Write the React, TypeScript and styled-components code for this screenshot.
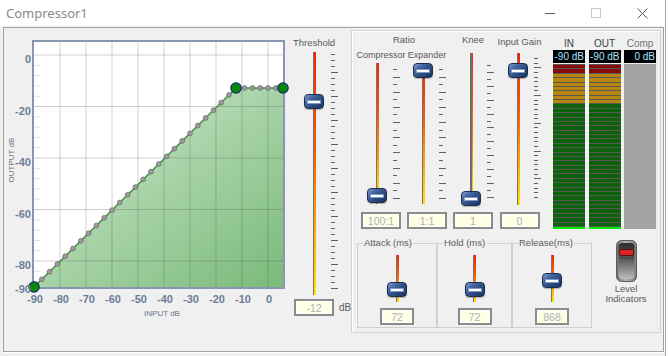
import React from "react";
import styled, { createGlobalStyle } from "styled-components";

const GlobalStyle = createGlobalStyle`
  html, body { margin: 0; padding: 0; background: #ffffff; }
  body { width: 668px; height: 356px; overflow: hidden; font-family: "Liberation Sans", Arial, sans-serif; }
  * { box-sizing: border-box; }
`;

const Window = styled.div`
  width: 666px;
  height: 356px;
  display: flex;
  flex-direction: column;
  background: #f0f0f0;
  border-right: 1px solid #a8a8a8;
`;

const TitleBar = styled.div`
  height: 26px;
  flex-shrink: 0;
  background: #ffffff;
  display: flex;
  align-items: center;
  padding-left: 6px;
`;

const Title = styled.div`
  flex: 1;
  font-family: "Noto Sans", "Liberation Sans", sans-serif;
  font-size: 13px;
  line-height: 26px;
  color: #8a8a8a;
`;

const WinButton = styled.div`
  width: 46px;
  height: 26px;
  display: flex;
  align-items: center;
  justify-content: center;
`;

const Body = styled.div`
  flex: 1;
  display: flex;
  padding: 1px 1px 4px 3px;
`;

const Frame = styled.div`
  flex: 1;
  display: flex;
  align-items: flex-start;
  border: 1px solid #a2a2a2;
  box-shadow: 0 1px 0 #ffffff, 1px 0 0 #ffffff;
`;

const ChartSvg = styled.svg`
  flex-shrink: 0;
  display: block;
`;

const AxisText = styled.text`
  font-family: "Liberation Sans", Arial, sans-serif;
  font-size: 11px;
  font-weight: bold;
  fill: #6d7d97;
`;

const AxisTitle = styled.text`
  font-family: "Liberation Sans", Arial, sans-serif;
  font-size: 8px;
  fill: #6a7589;
`;

const ThresholdCol = styled.div`
  width: 60px;
  flex-shrink: 0;
  display: flex;
  flex-direction: column;
  padding-top: 9px;
`;

const Label = styled.div<{ $mt?: number; $w?: number; $fs?: number }>`
  margin-top: ${(p) => p.$mt ?? 0}px;
  ${(p) => (p.$w ? `width: ${p.$w}px;` : "")}
  height: 12px;
  line-height: 12px;
  font-size: ${(p) => p.$fs ?? 9.5}px;
  color: #5a5a5a;
  display: flex;
  justify-content: center;
  white-space: nowrap;
`;

const SliderRow = styled.div<{ $h: number; $pl: number; $mt: number; $center?: boolean }>`
  display: flex;
  height: ${(p) => p.$h}px;
  margin-top: ${(p) => p.$mt}px;
  padding-left: ${(p) => p.$pl}px;
  justify-content: ${(p) => (p.$center ? "center" : "flex-start")};
  align-self: stretch;
`;

const TrackWrap = styled.div`
  position: relative;
  width: 20px;
  height: 100%;
  display: flex;
  justify-content: center;
  flex-shrink: 0;
`;

const Track = styled.div<{ $gray?: boolean }>`
  width: 3px;
  height: 100%;
  background: ${(p) =>
    p.$gray
      ? "linear-gradient(to right, #6c6c6c 0 2px, transparent 2px), linear-gradient(#ff2a00, #ff7a00 55%, #ffe000)"
      : "linear-gradient(to right, #747474 0 1px, transparent 1px), linear-gradient(#ff1e00, #ff5a00 40%, #ffa000 68%, #ffe600)"};
`;

const Handle = styled.div<{ $top: number }>`
  position: absolute;
  left: 0;
  top: ${(p) => p.$top}px;
  width: 20px;
  height: 15px;
  border-radius: 4px;
  border: 1px solid #1c2d52;
  background: linear-gradient(140deg, #86a2d0 0%, #46679f 28%, #2c4b80 60%, #1b3260 100%);
  box-shadow: 0 1px 1px rgba(0, 0, 0, 0.25);
  display: flex;
  align-items: center;
  justify-content: center;
`;

const Grip = styled.div`
  width: 12px;
  height: 2px;
  background: #ffffff;
  box-shadow: 0 0 0 1px rgba(150, 182, 228, 0.7);
`;

const Ticks = styled.div<{ $pt: number; $pb: number; $ml: number }>`
  height: 100%;
  margin-left: ${(p) => p.$ml}px;
  padding-top: ${(p) => p.$pt}px;
  padding-bottom: ${(p) => p.$pb}px;
  display: flex;
  flex-direction: column;
  justify-content: space-between;
`;

const Tick = styled.div<{ $long: boolean }>`
  height: 1px;
  width: ${(p) => (p.$long ? 7 : 4)}px;
  background: #626262;
`;

const ValueBox = styled.div<{ $w?: number; $mt?: number }>`
  width: ${(p) => p.$w ?? 40}px;
  height: 17px;
  margin-top: ${(p) => p.$mt ?? 0}px;
  flex-shrink: 0;
  align-self: center;
  border: 2px solid #8b8b8b;
  box-shadow: inset 0 0 0 1px #ffffff;
  background: #ffffe3;
  color: #a7b1bb;
  font-size: 10.5px;
  display: flex;
  align-items: center;
  justify-content: center;
`;

const ValueRow = styled.div`
  display: flex;
  align-items: center;
  margin-top: 4px;
  padding-left: 4px;
`;

const Unit = styled.span`
  margin-left: 5px;
  font-size: 10px;
  color: #5a5a5a;
`;

const Panel = styled.div`
  width: 310px;
  height: 303px;
  margin: 2px 0 0 1px;
  flex-shrink: 0;
  border: 1px solid #d2d2d2;
  box-shadow: inset 1px 1px 0 #ffffff;
  display: flex;
  flex-direction: column;
`;

const TopRow = styled.div`
  display: flex;
  align-items: flex-start;
  padding: 3px 0 0 6px;
`;

const RatioGroup = styled.div`
  width: 92px;
  display: flex;
  flex-direction: column;
`;

const SubRow = styled.div`
  display: flex;
  margin-top: 3px;
`;

const SliderCol = styled.div<{ $w: number }>`
  width: ${(p) => p.$w}px;
  display: flex;
  flex-direction: column;
`;

const Meters = styled.div`
  display: flex;
  gap: 3.5px;
  margin-left: 10px;
`;

const MeterCol = styled.div`
  width: 32px;
  display: flex;
  flex-direction: column;
`;

const MeterLabel = styled.div<{ $dim?: boolean }>`
  margin-top: 4px;
  height: 12px;
  line-height: 12px;
  font-size: 10px;
  text-align: center;
  color: ${(p) => (p.$dim ? "#747474" : "#404040")};
`;

const Readout = styled.div`
  height: 13px;
  background: #000000;
  color: #a2e6ff;
  font-size: 10px;
  line-height: 13px;
  text-align: right;
  padding-right: 1px;
  white-space: nowrap;
`;

const Bar = styled.div`
  height: 165px;
  margin-top: 1px;
  display: flex;
  flex-direction: column;
  gap: 1px;
  padding-top: 1px;
  background: #575757;
`;

const Segment = styled.div<{ $c: string }>`
  flex: 1;
  background: ${(p) => p.$c};
`;

const BrightLine = styled.div`
  height: 2px;
  flex: none;
  background: #00ee00;
`;

const CompBar = styled.div`
  height: 165px;
  margin-top: 1px;
  background: #a3a3a3;
`;

const BottomRow = styled.div`
  display: flex;
  align-items: flex-start;
  margin-top: 8px;
  padding-left: 5px;
`;

const Group = styled.fieldset<{ $w: number }>`
  width: ${(p) => p.$w}px;
  min-width: 0;
  margin: 0;
  padding: 6px 0 2px;
  border: 1px solid #d0d0d0;
  display: flex;
  flex-direction: column;
  align-items: center;
`;

const Legend = styled.legend`
  margin-left: 5px;
  padding: 0 1px;
  font-size: 9.5px;
  line-height: 12px;
  color: #5a5a5a;
`;

const LevelCol = styled.div`
  flex: 1;
  display: flex;
  flex-direction: column;
  align-items: center;
  padding-top: 3px;
`;

const LevelText = styled.div`
  margin-top: 2px;
  font-size: 9.5px;
  line-height: 10px;
  text-align: center;
  color: #5a5a5a;
`;

type SliderProps = {
  h: number;
  top: number;
  ticks?: boolean[];
  pt?: number;
  pb?: number;
  ml?: number;
  pl?: number;
  mt?: number;
  gray?: boolean;
  center?: boolean;
};

function VSlider({ h, top, ticks, pt = 0, pb = 0, ml = 6, pl = 0, mt = 0, gray, center }: SliderProps) {
  return (
    <SliderRow $h={h} $pl={pl} $mt={mt} $center={center}>
      <TrackWrap>
        <Track $gray={gray} />
        <Handle $top={top}>
          <Grip />
        </Handle>
      </TrackWrap>
      {ticks && (
        <Ticks $pt={pt} $pb={pb} $ml={ml}>
          {ticks.map((l, i) => (
            <Tick key={i} $long={l} />
          ))}
        </Ticks>
      )}
    </SliderRow>
  );
}

const range = (n: number, f: (i: number) => boolean) => Array.from({ length: n }, (_, i) => f(i));

const thresholdTicks = range(40, (i) => (39 - i) % 4 === 0);
const ratioTicks = range(18, (i) => i % 2 === 1);
const kneeTicks = range(20, (i) => i % 2 === 1);
const gainTicks = range(31, (i) => i % 6 === 2);

const segColors = [
  ...Array(2).fill("#880b0b"),
  ...Array(7).fill("#b8860e"),
  ...Array(28).fill("#0b620b"),
];

function Meter({ label, value }: { label: string; value: string }) {
  return (
    <MeterCol>
      <MeterLabel>{label}</MeterLabel>
      <Readout>{value}</Readout>
      <Bar>
        {segColors.map((c, i) => (
          <Segment key={i} $c={c} />
        ))}
        <BrightLine />
      </Bar>
    </MeterCol>
  );
}

function Chart() {
  const X = (d: number) => 34 + (d + 90) * 2.6;
  const Y = (d: number) => 55 - d * 2.575;
  const start = { x: 34, y: 287 };
  const knee = { x: 236, y: 88 };
  const end = { x: 283, y: 88 };
  const vLines = [-80, -70, -60, -50, -40, -30, -20, -10, 0];
  const hLines = [0, -20, -40, -60, -80];
  const minor: number[] = [];
  for (let k = 1; k <= 22; k++) if (k % 5 !== 0) minor.push(55 + k * 10.3);
  const dots: { x: number; y: number }[] = [];
  for (let d = -87; d <= 3; d += 3) {
    if (d === -12) continue;
    const x = X(d);
    const y = x <= knee.x ? start.y + ((x - start.x) * (knee.y - start.y)) / (knee.x - start.x) : knee.y;
    dots.push({ x, y });
  }
  const xLabels = [-90, -80, -70, -60, -50, -40, -30, -20, -10, 0];
  return (
    <ChartSvg width={286} height={292} viewBox="4 28 286 292">
      <defs>
        <linearGradient id="fillG" x1="0" y1="0" x2="1" y2="1">
          <stop offset="0%" stopColor="#d4ecd4" />
          <stop offset="100%" stopColor="#7aba7a" />
        </linearGradient>
      </defs>
      <rect x={34} y={42} width={249} height={245} fill="#ffffff" />
      <polygon
        points={`${start.x},${start.y} ${knee.x},${knee.y} ${end.x},${end.y} ${end.x},${start.y}`}
        fill="url(#fillG)"
      />
      {vLines.map((d) => (
        <line key={d} x1={X(d)} y1={42} x2={X(d)} y2={287} stroke="rgba(60,60,60,0.24)" strokeWidth={1} />
      ))}
      {hLines.map((d) => (
        <line key={d} x1={34} y1={Y(d)} x2={283} y2={Y(d)} stroke="rgba(60,60,60,0.24)" strokeWidth={1} />
      ))}
      {minor.map((y) => (
        <line key={y} x1={34} y1={y} x2={41} y2={y} stroke="rgba(60,60,60,0.16)" strokeWidth={1} />
      ))}
      <rect x={33} y={41} width={251} height={247} fill="none" stroke="#8797af" strokeWidth={2} />
      <polyline
        points={`${start.x},${start.y} ${knee.x},${knee.y} ${end.x},${end.y}`}
        fill="none"
        stroke="#4b8e4b"
        strokeWidth={1.6}
      />
      {dots.map((p, i) => (
        <circle key={i} cx={p.x} cy={p.y} r={2.4} fill="#9c9c9c" stroke="#6e6e6e" strokeWidth={0.8} />
      ))}
      {[start, knee, end].map((p, i) => (
        <circle key={i} cx={p.x} cy={p.y} r={5.2} fill="#068a06" stroke="#142a7a" strokeWidth={1.2} />
      ))}
      {hLines.map((d) => (
        <AxisText key={d} x={31} y={Y(d) + 4} textAnchor="end" dominantBaseline="central">
          {d}
        </AxisText>
      ))}
      <AxisText x={31} y={289} textAnchor="end" dominantBaseline="central">
        -90
      </AxisText>
      {xLabels.map((d) => (
        <AxisText key={d} x={X(d) + 1} y={299} textAnchor="middle" dominantBaseline="central">
          {d}
        </AxisText>
      ))}
      <AxisTitle x={162} y={313} textAnchor="middle" dominantBaseline="central">
        INPUT dB
      </AxisTitle>
      <AxisTitle x={11} y={160} textAnchor="middle" dominantBaseline="central" transform="rotate(-90 11 160)">
        OUTPUT dB
      </AxisTitle>
    </ChartSvg>
  );
}

function LevelSwitch() {
  return (
    <svg width="21" height="42" viewBox="0 0 21 42">
      <defs>
        <linearGradient id="swOuter" x1="0" y1="0" x2="1" y2="0">
          <stop offset="0%" stopColor="#6a6a6a" />
          <stop offset="45%" stopColor="#b4b4b4" />
          <stop offset="100%" stopColor="#7a7a7a" />
        </linearGradient>
        <linearGradient id="swRock" x1="0" y1="0" x2="0" y2="1">
          <stop offset="0%" stopColor="#2e2e2e" />
          <stop offset="45%" stopColor="#5a5a5a" />
          <stop offset="100%" stopColor="#bdbdbd" />
        </linearGradient>
      </defs>
      <rect x="0.5" y="0.5" width="20" height="41" rx="5" fill="url(#swOuter)" stroke="#5c5c5c" />
      <rect x="2.5" y="3" width="16" height="36" rx="4" fill="url(#swRock)" />
      <rect x="3.5" y="9.5" width="14" height="6" rx="1.5" fill="#d62525" stroke="#5a0d0d" />
      <line x1="4" y1="18" x2="17" y2="18" stroke="#1e1e1e" strokeDasharray="1 1" />
    </svg>
  );
}

export default function App() {
  return (
    <>
      <GlobalStyle />
      <Window>
        <TitleBar>
          <Title>Compressor1</Title>
          <WinButton>
            <svg width="10" height="10" viewBox="0 0 10 10">
              <line x1="0" y1="5.5" x2="10" y2="5.5" stroke="#5a5a5a" strokeWidth="1" />
            </svg>
          </WinButton>
          <WinButton>
            <svg width="10" height="10" viewBox="0 0 10 10">
              <rect x="0.5" y="0.5" width="9" height="9" fill="none" stroke="#c8c8c8" strokeWidth="1" />
            </svg>
          </WinButton>
          <WinButton>
            <svg width="11" height="11" viewBox="0 0 11 11">
              <line x1="0.5" y1="0.5" x2="10.5" y2="10.5" stroke="#5a5a5a" strokeWidth="1" />
              <line x1="10.5" y1="0.5" x2="0.5" y2="10.5" stroke="#5a5a5a" strokeWidth="1" />
            </svg>
          </WinButton>
        </TitleBar>
        <Body>
          <Frame>
            <Chart />
            <ThresholdCol>
              <Label $w={48}>Threshold</Label>
              <VSlider h={243} top={42} mt={3} pl={14} ml={7} pt={2} pb={6} ticks={thresholdTicks} />
              <ValueRow>
                <ValueBox>-12</ValueBox>
                <Unit>dB</Unit>
              </ValueRow>
            </ThresholdCol>
            <Panel>
              <TopRow>
                <RatioGroup>
                  <Label>Ratio</Label>
                  <SubRow>
                    <SliderCol $w={46}>
                      <Label $fs={9}>Compressor</Label>
                      <VSlider h={141} top={125} mt={2} pl={9} pt={6} pb={5} ticks={ratioTicks} />
                      <ValueBox $mt={8}>100:1</ValueBox>
                    </SliderCol>
                    <SliderCol $w={46}>
                      <Label $fs={9}>Expander</Label>
                      <VSlider h={141} top={0} mt={2} pl={9} pt={6} pb={5} ticks={ratioTicks} />
                      <ValueBox $mt={8}>1:1</ValueBox>
                    </SliderCol>
                  </SubRow>
                </RatioGroup>
                <SliderCol $w={46}>
                  <Label>Knee</Label>
                  <VSlider h={152} top={138} mt={7} pl={11} pt={12} pb={7} ticks={kneeTicks} gray />
                  <ValueBox $mt={7}>1</ValueBox>
                </SliderCol>
                <SliderCol $w={47}>
                  <Label $mt={2}>Input Gain</Label>
                  <VSlider h={152} top={10} mt={5} pl={12} pt={5} pb={7} ticks={gainTicks} />
                  <ValueBox $mt={7}>0</ValueBox>
                </SliderCol>
                <Meters>
                  <Meter label="IN" value="-90 dB" />
                  <Meter label="OUT" value="-90 dB" />
                  <MeterCol>
                    <MeterLabel $dim>Comp</MeterLabel>
                    <Readout>0 dB</Readout>
                    <CompBar />
                  </MeterCol>
                </Meters>
              </TopRow>
              <BottomRow>
                <Group $w={80}>
                  <Legend>Attack (ms)</Legend>
                  <VSlider h={47} top={27} center />
                  <ValueBox $w={34} $mt={6}>72</ValueBox>
                </Group>
                <Group $w={75}>
                  <Legend>Hold (ms)</Legend>
                  <VSlider h={47} top={27} center />
                  <ValueBox $w={34} $mt={6}>72</ValueBox>
                </Group>
                <Group $w={80}>
                  <Legend>Release(ms)</Legend>
                  <VSlider h={47} top={18} center />
                  <ValueBox $w={34} $mt={6}>868</ValueBox>
                </Group>
                <LevelCol>
                  <LevelSwitch />
                  <LevelText>
                    Level
                    <br />
                    Indicators
                  </LevelText>
                </LevelCol>
              </BottomRow>
            </Panel>
          </Frame>
        </Body>
      </Window>
    </>
  );
}
